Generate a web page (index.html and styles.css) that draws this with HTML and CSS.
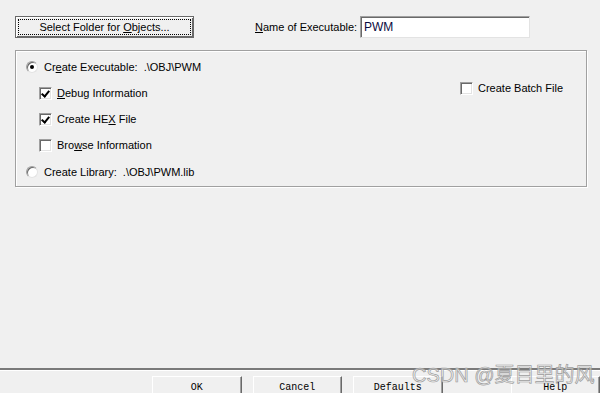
FILE: index.html
```html
<!DOCTYPE html>
<html>
<head>
<meta charset="utf-8">
<link rel="stylesheet" href="styles.css">
</head>
<body>
<div class="dialog">
  <div class="top-row">
    <button class="btn select-btn"><span class="focus"><span>Select Folder for <u>O</u>bjects...</span></span></button>
    <label class="name-label"><u>N</u>ame of Executable:</label>
    <div class="input">PWM</div>
  </div>
  <div class="group">
    <div class="options">
      <div class="opt"><span class="radio on"></span><span>Cr<u>e</u>ate Executable:&nbsp; .\OBJ\PWM</span></div>
      <div class="opt sub"><span class="check on"></span><span><u>D</u>ebug Information</span></div>
      <div class="opt sub"><span class="check on"></span><span>Create HE<u>X</u> File</span></div>
      <div class="opt sub"><span class="check"></span><span>Bro<u>w</u>se Information</span></div>
      <div class="opt last"><span class="radio"></span><span>Create Library:&nbsp; .\OBJ\PWM.lib</span></div>
    </div>
    <div class="side">
      <div class="opt"><span class="check"></span><span>Create Batch File</span></div>
    </div>
  </div>
  <div class="spacer"></div>
  <div class="footer">
    <button class="btn fbtn">OK</button>
    <button class="btn fbtn">Cancel</button>
    <button class="btn fbtn">Defaults</button>
    <button class="btn fbtn help">Help</button>
  </div>
</div>
<div class="watermark">CSDN @夏目里的风</div>
</body>
</html>
```
FILE: styles.css
```css
html, body {
  margin: 0;
  padding: 0;
  width: 600px;
  height: 393px;
  overflow: hidden;
  background: #f0f0f0;
  font-family: "Liberation Sans", Arial, sans-serif;
  font-size: 11px;
  color: #000;
}
.dialog {
  position: relative;
  height: 393px;
  display: flex;
  flex-direction: column;
}
u { text-decoration: underline; text-underline-offset: 1px; }
.top-row {
  display: flex;
  align-items: center;
  padding: 16px 0 0 15px;
  height: 22px;
}
.btn {
  font-family: inherit;
  font-size: 11px;
  color: #000;
  background: #f0f0f0;
  border: 1px solid;
  border-color: #fff #696969 #696969 #fff;
  box-shadow: inset -1px -1px 0 #a0a0a0;
  padding: 0;
  margin: 0;
  box-sizing: border-box;
}
.select-btn {
  width: 179px;
  height: 22px;
  display: flex;
  padding: 2px;
  border: 1px solid #696969;
  box-shadow: inset 1px 1px 0 #fff, inset -1px -1px 0 #696969;
}
.focus {
  flex: 1;
  border: 1px dotted #000;
  display: flex;
  align-items: center;
  justify-content: center;
  line-height: 12px;
}
.name-label {
  margin-left: 61px;
  width: 105px;
}
.input {
  width: 170px;
  height: 22px;
  box-sizing: border-box;
  background: #fff;
  border: 1px solid;
  border-color: #a0a0a0 #e3e3e3 #e3e3e3 #a0a0a0;
  box-shadow: inset 1px 1px 0 #696969;
  padding: 3px 0 0 3px;
  font-size: 12px;
  color: #0a0a40;
}
.group {
  margin: 12px 0 0 15px;
  width: 572px;
  height: 137px;
  box-sizing: border-box;
  border: 1px solid #a0a0a0;
  box-shadow: 1px 1px 0 #fff, inset 1px 1px 0 #fff;
  display: flex;
  justify-content: space-between;
  padding: 9px 0 0 10px;
}
.options {
  display: flex;
  flex-direction: column;
  gap: 12px;
}
.opt {
  display: flex;
  align-items: center;
  height: 14px;
  white-space: nowrap;
}
.opt.sub { margin-left: 13px; }
.opt.last { margin-top: 1px; }
.side {
  padding: 21px 23px 0 0;
}
.radio {
  width: 12px;
  height: 12px;
  box-sizing: border-box;
  border-radius: 50%;
  background: #fff;
  border: 1px solid;
  border-color: #a0a0a0 #e3e3e3 #e3e3e3 #a0a0a0;
  box-shadow: inset 1px 1px 0 #696969;
  margin-right: 6px;
  position: relative;
}
.radio.on::after {
  content: "";
  position: absolute;
  left: 3px;
  top: 3px;
  width: 4px;
  height: 4px;
  border-radius: 50%;
  background: #000;
}
.check {
  width: 13px;
  height: 13px;
  box-sizing: border-box;
  background: #fff;
  border: 1px solid;
  border-color: #a0a0a0 #fff #fff #a0a0a0;
  box-shadow: inset 1px 1px 0 #696969, inset -1px -1px 0 #e3e3e3;
  margin-right: 5px;
  position: relative;
}
.check.on::after {
  content: "";
  position: absolute;
  left: 3px;
  top: 1px;
  width: 3px;
  height: 6px;
  border: solid #000;
  border-width: 0 2px 2px 0;
  transform: rotate(40deg);
}
.spacer { flex: 1; }
.footer {
  border-top: 2px solid #7a7a7a;
  box-shadow: inset 0 1px 0 #fff;
  height: 23px;
  padding: 6px 0 0 152px;
  display: flex;
  gap: 11px;
  flex-shrink: 0;
  margin-bottom: -6px;
}
.fbtn {
  width: 91px;
  height: 23px;
  font-family: "Liberation Mono", "Courier New", monospace;
  font-size: 10px;
  line-height: 10px;
  padding: 6px 0 0 0;
  display: flex;
  justify-content: center;
  align-items: flex-start;
  border-color: #fff #696969 #696969 #fff;
}
.fbtn.help { margin-left: 57px; }
.watermark {
  position: absolute;
  left: 412px;
  top: 359px;
  font-family: "Liberation Sans", "Noto Sans CJK SC", sans-serif;
  font-size: 20px;
  color: rgba(240,240,240,0.6);
  -webkit-text-stroke: 0.7px #9c9c9c;
  white-space: nowrap;
}
```
